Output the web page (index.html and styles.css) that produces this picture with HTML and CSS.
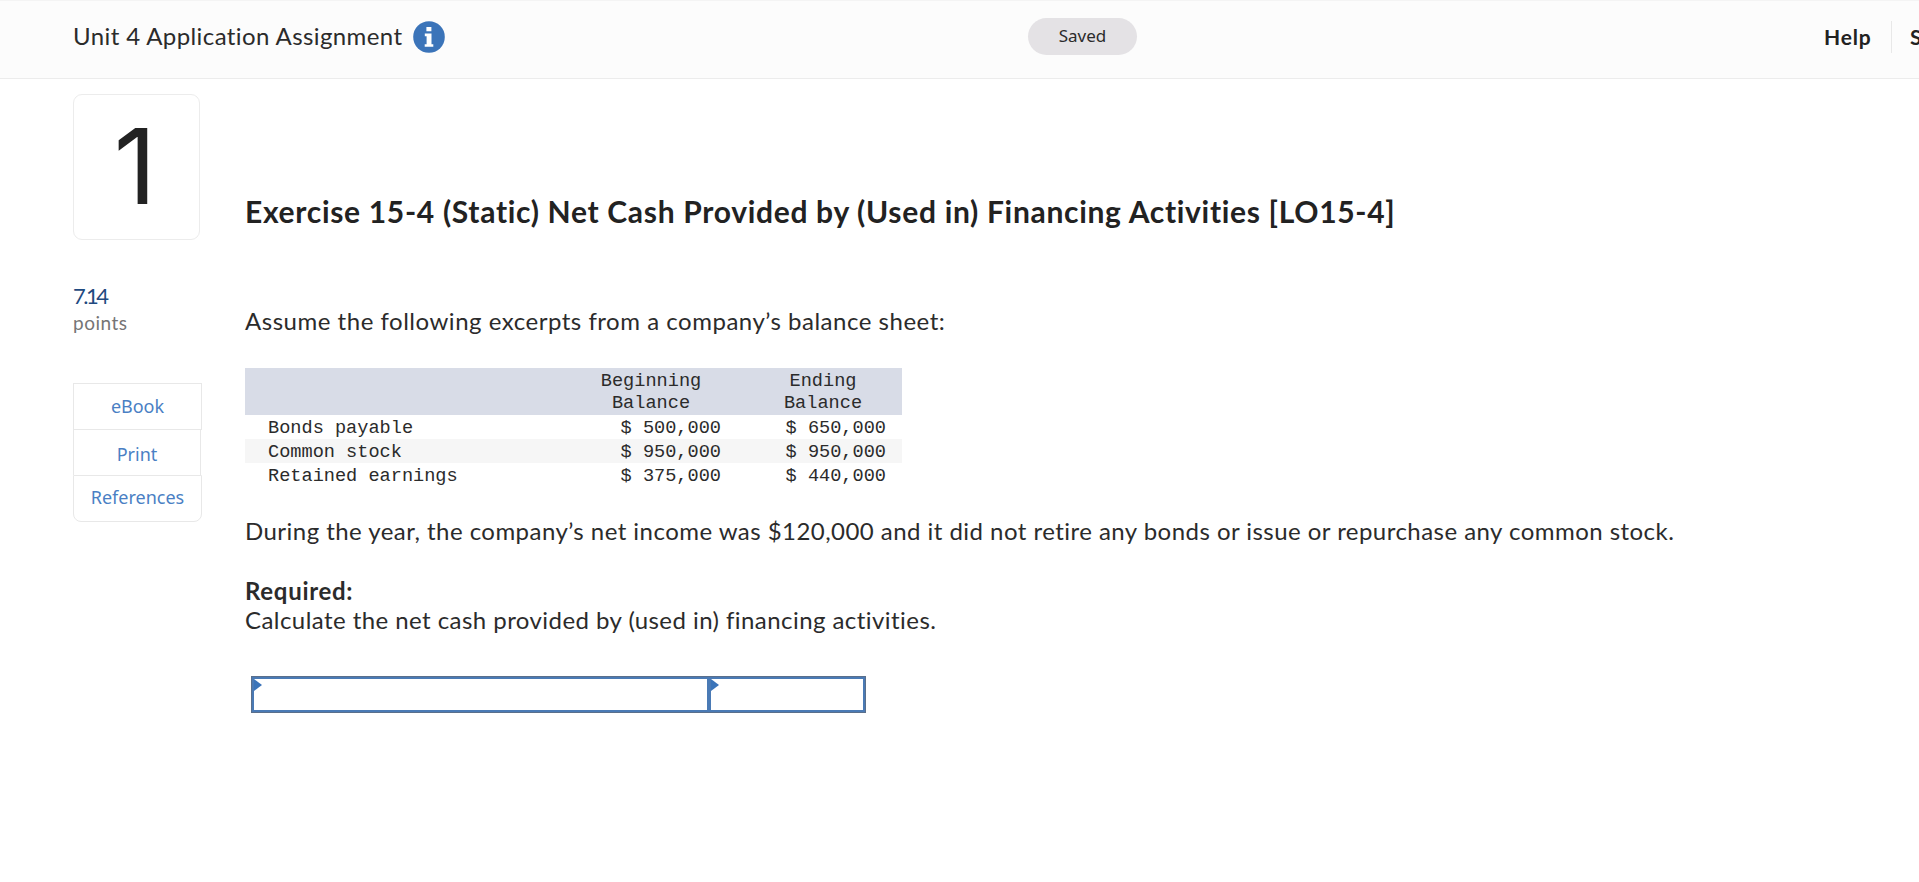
FILE: index.html
```html
<!DOCTYPE html>
<html lang="en">

<head>
    <meta charset="UTF-8">
    <meta name="viewport" content="width=device-width, initial-scale=1.0">
    <title>Unit 4 Application Assignment</title>
    <link rel="stylesheet" href="styles.css">
</head>

<body>
    <header class="header">
        <div class="title">
            <h1>Unit 4 Application Assignment</h1>
            <svg class="info" viewBox="0 0 32 32">
                <circle cx="16" cy="16" r="15.8" fill="#3b74b9"/>
                <path d="M13.4 6h5v4.2h-5zM11.8 12.6h6.7v10.6h1.8v2.6h-8.6v-2.6h1.9v-8h-1.8z" fill="#fff"/>
            </svg>
        </div>
        <span class="saved">Saved</span>
        <nav class="nav">
            <a class="help">Help</a>
            <a class="save">Save &amp; Exit</a>
        </nav>
    </header>
    <main class="main">
        <aside class="side">
            <div class="number">1</div>
            <div class="points">7.14</div>
            <div class="points-label">points</div>
            <ul class="links">
                <li class="ebook">eBook</li>
                <li class="print">Print</li>
                <li class="refs">References</li>
            </ul>
        </aside>
        <section class="content">
            <h2>Exercise 15-4 (Static) Net Cash Provided by (Used in) Financing Activities [LO15-4]</h2>
            <p class="intro">Assume the following excerpts from a company’s balance sheet:</p>
            <table class="balance">
                <thead>
                    <tr>
                        <th class="name"></th>
                        <th class="begin">Beginning<br>Balance</th>
                        <th class="end">Ending<br>Balance</th>
                    </tr>
                </thead>
                <tbody>
                    <tr>
                        <td>Bonds payable</td>
                        <td>$ 500,000</td>
                        <td>$ 650,000</td>
                    </tr>
                    <tr>
                        <td>Common stock</td>
                        <td>$ 950,000</td>
                        <td>$ 950,000</td>
                    </tr>
                    <tr>
                        <td>Retained earnings</td>
                        <td>$ 375,000</td>
                        <td>$ 440,000</td>
                    </tr>
                </tbody>
            </table>
            <p class="during">During the year, the company’s net income was $120,000 and it did not retire any bonds or issue or repurchase any common stock.</p>
            <p class="required"><b>Required:</b><br><span>Calculate the net cash provided by (used in) financing activities.</span></p>
            <div class="answer">
                <div class="cell label"></div>
                <div class="cell amount"></div>
            </div>
        </section>
    </main>
</body>

</html>
```
FILE: styles.css
```css
* {
    margin: 0;
    padding: 0;
    box-sizing: border-box;
}

ul {
    list-style: none;
}

body {
    font-family: Lato, "Liberation Sans", sans-serif;
    font-size: 24px;
    line-height: 30px;
    color: #2b2b2b;
    background-color: #fff;
    overflow: hidden;
}

.header {
    display: grid;
    grid-template-columns: 955px 796px auto;
    align-items: center;
    height: 79px;
    padding: 0 0 6px 73px;
    background-color: #fcfcfc;
    border-top: 1px solid #f4f4f4;
    border-bottom: 1px solid #ececec;
    white-space: nowrap;
    overflow: hidden;
}

.title {
    display: flex;
    align-items: center;
}

.title h1 {
    width: 340px;
    padding-bottom: 2px;
    font-size: 24px;
    font-weight: 400;
    letter-spacing: 0.4px;
}

.info {
    width: 32px;
    height: 32px;
}

.saved {
    width: 109px;
    height: 37px;
    border-radius: 19px;
    font-family: "Noto Sans", sans-serif;
    font-size: 17px;
    line-height: 36px;
    text-align: center;
    background-color: #e4e2e5;
}

.nav {
    display: flex;
    font-family: Lato, sans-serif;
    font-size: 21px;
    font-weight: 700;
    line-height: 32px;
    letter-spacing: 0.8px;
    color: #222;
}

.help {
    width: 68px;
    border-right: 1px solid #e8e8e8;
}

.save {
    padding-left: 18px;
}

.main {
    display: flex;
    padding-left: 73px;
}

.side {
    flex: none;
    width: 172px;
    padding-top: 15px;
}

.number {
    width: 127px;
    height: 146px;
    padding-right: 3px;
    border: 1px solid #ececec;
    border-radius: 9px;
    font-family: Inter, sans-serif;
    font-size: 105px;
    line-height: 142px;
    text-align: center;
    color: #222;
}

.points {
    margin-top: 41px;
    font-size: 22px;
    color: #1f4a80;
    letter-spacing: -2.5px;
}

.points-label {
    font-size: 19px;
    line-height: 24px;
    letter-spacing: 0.5px;
    color: #757575;
}

.links {
    width: 129px;
    margin-top: 48px;
    font-family: "Noto Sans", sans-serif;
    font-size: 18px;
    text-align: center;
    color: #4a7fc4;
}

.links li {
    border: 1px solid #e8e8e8;
}

.ebook {
    height: 47px;
    line-height: 44px;
}

.links .print {
    width: 128px;
    height: 45px;
    line-height: 49px;
    border-top: none;
    border-bottom: none;
}

.refs {
    height: 47px;
    line-height: 42px;
    border-radius: 0 0 8px 8px;
}

.content {
    padding-top: 114px;
    white-space: nowrap;
}

.content h2 {
    font-size: 30px;
    line-height: 36px;
    letter-spacing: 0.69px;
    color: #222;
}

.intro {
    margin-top: 77px;
    letter-spacing: 0.52px;
}

.balance {
    width: 657px;
    margin-top: 32px;
    border-collapse: collapse;
    table-layout: fixed;
    font-family: "Liberation Mono", monospace;
    font-size: 18.6px;
    line-height: 20px;
}

.balance thead {
    background-color: #d8dce7;
}

.balance th {
    height: 47px;
    padding-top: 3px;
    font-weight: 400;
    line-height: 22px;
    vertical-align: top;
}

.balance th br {
    line-height: 24px;
}

.balance .name {
    width: 336px;
}

.balance .begin {
    width: 140px;
}

.balance .end {
    padding-left: 23px;
}

.balance tbody tr:nth-child(2) {
    background-color: #f6f6f6;
}

.balance td {
    padding-top: 4px;
    text-align: right;
}

.balance td:first-child {
    padding-left: 23px;
    text-align: left;
}

.balance td:last-child {
    padding-right: 16px;
}

.during {
    margin-top: 29px;
    letter-spacing: 0.46px;
}

.required {
    margin-top: 30px;
    line-height: 29px;
    letter-spacing: 0.44px;
}

.required b {
    letter-spacing: 0.7px;
}

.answer {
    display: flex;
    width: 615px;
    height: 37px;
    margin: 42px 0 0 6px;
    border: 1px solid #5a6f8c;
}

.cell {
    border: 2px solid #4a7ab5;
}

.label {
    width: 457px;
}

.amount {
    flex: 1;
}

/* blue marker in the corner of each input */
.cell::before {
    content: "";
    display: block;
    width: 0;
    border: 6px solid transparent;
    border-left: 8px solid #3b74b9;
    border-right: none;
}
```
